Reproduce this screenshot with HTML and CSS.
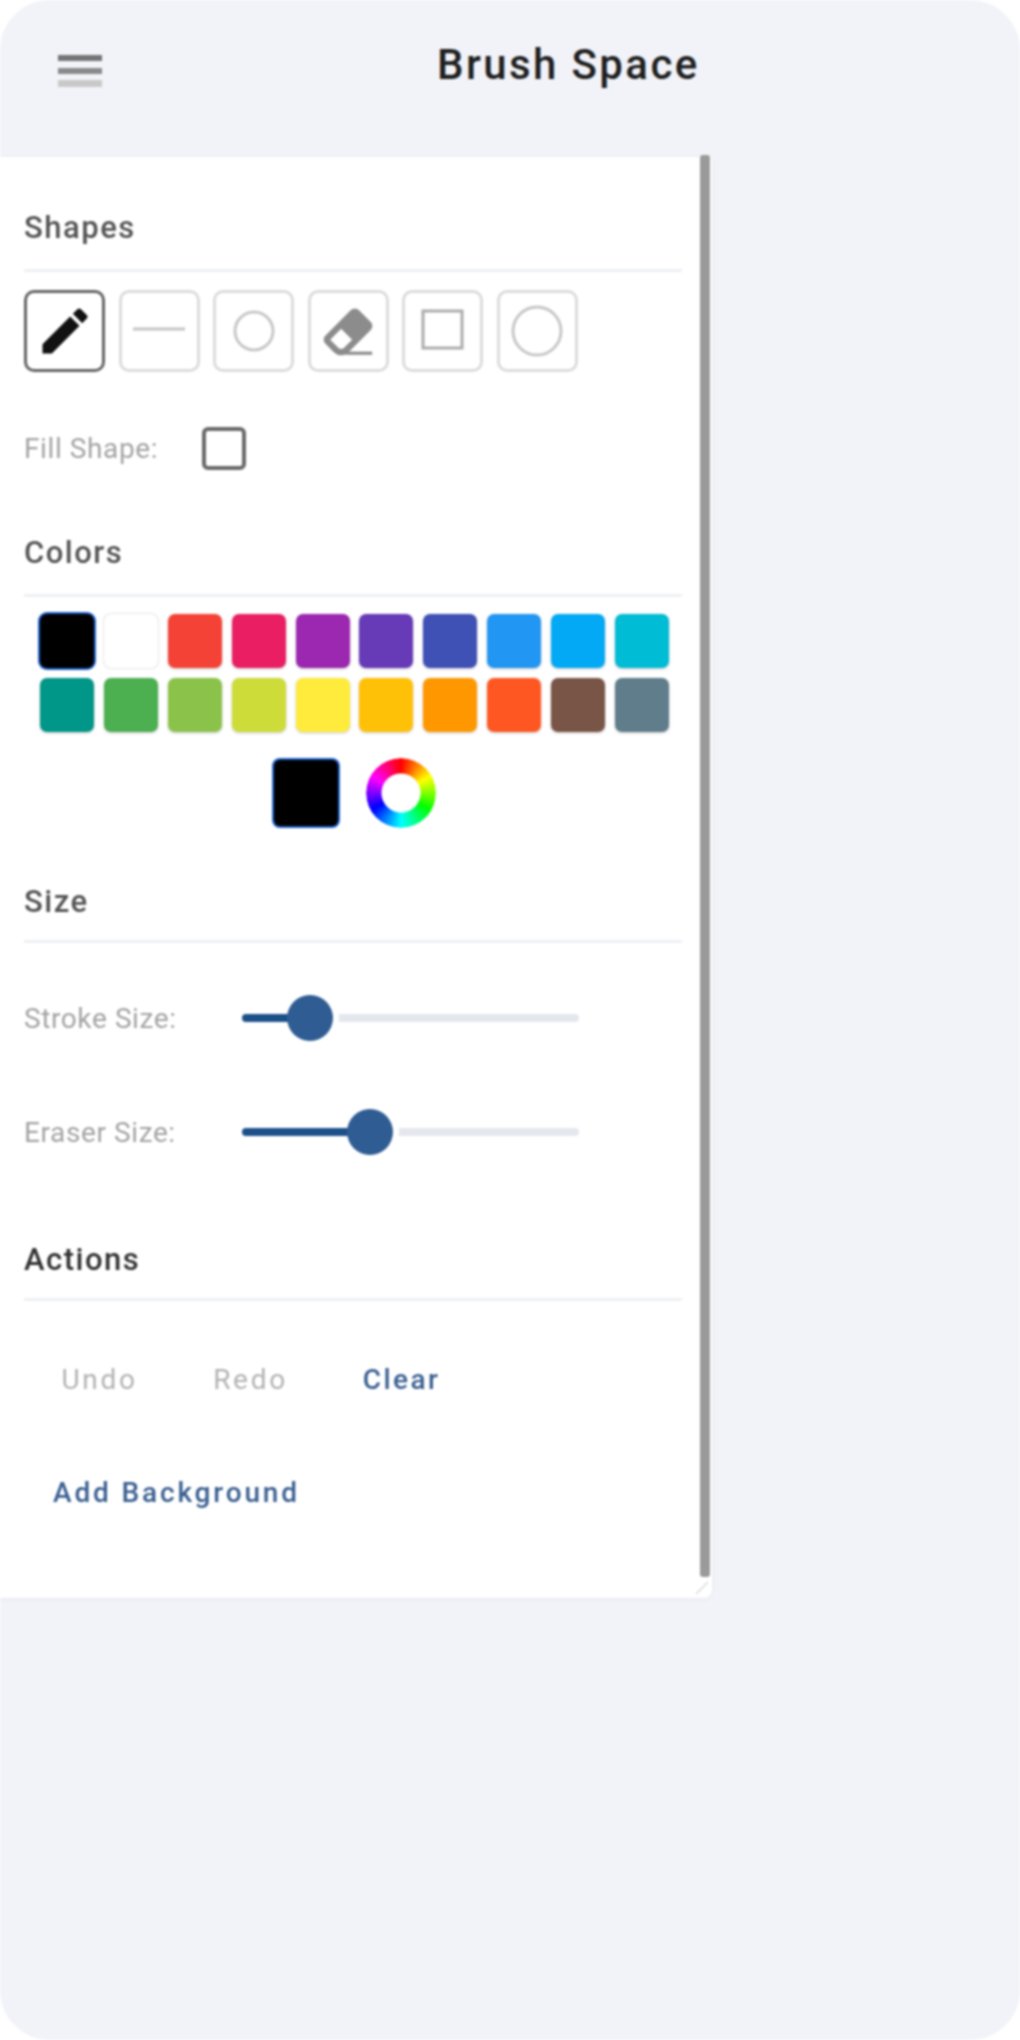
FILE: index.html
```html
<!DOCTYPE html>
<html lang="en">
<head>
<meta charset="utf-8">
<title>Brush Space</title>
<link rel="stylesheet" href="styles.css">
</head>
<body>
<div class="app">
  <header class="topbar">
    <button class="menu" aria-label="Menu">
      <svg viewBox="0 0 44 32" width="44" height="32"><rect y="0" width="44" height="6" fill="#757575"/><rect y="13" width="44" height="6" fill="#8a8a8a"/><rect y="25" width="44" height="7" fill="#c9c9c9"/></svg>
    </button>
    <h1 class="title">Brush Space</h1>
  </header>
  <aside class="panel">
    <div class="panel-body">
      <h2 class="section-title">Shapes</h2>
      <div class="shapes">
        <button class="tool tool-active"><svg viewBox="0 0 24 24" width="60" height="60"><path fill="#111" d="M3 17.25V21h3.75L17.81 9.94l-3.75-3.75L3 17.25zM20.71 7.04c.39-.39.39-1.02 0-1.41l-2.34-2.34c-.39-.39-1.02-.39-1.41 0l-1.83 1.83 3.75 3.75 1.83-1.83z"/></svg></button>
        <button class="tool"><svg viewBox="0 0 60 60" width="60" height="60"><path d="M4 28h52" stroke="#c4c4c4" stroke-width="3"/></svg></button>
        <button class="tool"><svg viewBox="0 0 60 60" width="60" height="60"><circle cx="30" cy="30" r="19" fill="none" stroke="#c8c8c8" stroke-width="3"/></svg></button>
        <button class="tool"><svg viewBox="0 0 24 24" width="58" height="58"><path fill="#8c8c8c" stroke="#8c8c8c" stroke-width=".6" d="M16.24 3.56l4.95 4.94c.78.79.78 2.05 0 2.84L12 20.53a4.01 4.01 0 0 1-5.66 0L2.81 17c-.78-.79-.78-2.05 0-2.84l10.6-10.6c.79-.78 2.05-.78 2.83 0M4.22 15.58l3.54 3.53c.78.79 2.04.79 2.83 0l3.53-3.53-4.95-4.95-4.95 4.95z"/><path d="M11 21.2h11" stroke="#8c8c8c" stroke-width="1.3"/></svg></button>
        <button class="tool"><svg viewBox="0 0 60 60" width="60" height="60"><rect x="10" y="10" width="39" height="37" fill="none" stroke="#acacac" stroke-width="3"/></svg></button>
        <button class="tool"><svg viewBox="0 0 60 60" width="60" height="60"><circle cx="30" cy="30" r="24" fill="none" stroke="#c8c8c8" stroke-width="3"/></svg></button>
      </div>
      <div class="fill-row">
        <span class="field-label fill-label">Fill Shape:</span>
        <span class="checkbox"></span>
      </div>

      <h2 class="section-title colors-title">Colors</h2>
      <div class="swatches">
        <span class="swatch swatch-selected" style="background:#000000"></span>
        <span class="swatch swatch-white" style="background:#ffffff"></span>
        <span class="swatch" style="background:#f44336"></span>
        <span class="swatch" style="background:#e91e63"></span>
        <span class="swatch" style="background:#9c27b0"></span>
        <span class="swatch" style="background:#673ab7"></span>
        <span class="swatch" style="background:#3f51b5"></span>
        <span class="swatch" style="background:#2196f3"></span>
        <span class="swatch" style="background:#03a9f4"></span>
        <span class="swatch" style="background:#00bcd4"></span>
        <span class="swatch" style="background:#009688"></span>
        <span class="swatch" style="background:#4caf50"></span>
        <span class="swatch" style="background:#8bc34a"></span>
        <span class="swatch" style="background:#cddc39"></span>
        <span class="swatch" style="background:#ffeb3b"></span>
        <span class="swatch" style="background:#ffc107"></span>
        <span class="swatch" style="background:#ff9800"></span>
        <span class="swatch" style="background:#ff5722"></span>
        <span class="swatch" style="background:#795548"></span>
        <span class="swatch" style="background:#607d8b"></span>
      </div>
      <div class="current-row">
        <span class="current-color"></span>
        <span class="wheel"></span>
      </div>

      <h2 class="section-title size-title">Size</h2>
      <div class="slider-row slider-first">
        <span class="field-label slider-label">Stroke Size:</span>
        <div class="slider">
          <span class="track-fill" style="width:68px"></span>
          <span class="thumb" style="left:68px"></span>
        </div>
      </div>
      <div class="slider-row slider-second">
        <span class="field-label slider-label">Eraser Size:</span>
        <div class="slider">
          <span class="track-fill" style="width:128px"></span>
          <span class="thumb" style="left:128px"></span>
        </div>
      </div>

      <h2 class="section-title actions-title">Actions</h2>
      <div class="actions">
        <button class="action action-disabled">Undo</button>
        <button class="action action-disabled">Redo</button>
        <button class="action">Clear</button>
      </div>
      <button class="add-background">Add Background</button>
    </div>
    <div class="scrollbar"></div>
  </aside>
</div>
</body>
</html>
```
FILE: styles.css
```css
* { box-sizing: border-box; }
html, body { margin: 0; padding: 0; background: #fff; }
body { font-family: Roboto, "Liberation Sans", sans-serif; }
button { font-family: inherit; background: none; border: 0; padding: 0; }

.app {
  height: 2040px;
  width: 1020px;
  background: #f1f3f8;
  border-radius: 50px;
  overflow: hidden;
  filter: blur(1.1px);
}
.topbar {
  height: 157px;
  display: flex;
  align-items: flex-start;
}
.menu { margin: 55px 0 0 58px; width: 44px; height: 32px; display: flex; }
.title {
  margin: 41px 0 0 335px;
  font-size: 42px;
  line-height: 48px;
  font-weight: 500;
  letter-spacing: 2.4px;
  color: #1f1f1f;
  white-space: nowrap;
}

.panel {
  position: relative;
  width: 712px;
  height: 1441px;
  background: #fff;
  display: flex;
  border-bottom-right-radius: 8px;
  box-shadow: 0 1px 5px rgba(40, 50, 80, .05);
}
.panel::after {
  content: "";
  position: absolute;
  right: 4px;
  bottom: 4px;
  width: 14px;
  height: 14px;
  background: linear-gradient(135deg, transparent 50%, #e6e6e6 50%, #e6e6e6 62%, transparent 62%);
}
.panel-body {
  width: 658px;
  margin: 0 24px;
  flex: none;
}
.scrollbar {
  width: 10px;
  height: 1422px;
  margin-left: -6px;
  margin-top: -2px;
  background: #9a9a9a;
  border-radius: 3px;
  flex: none;
}

.section-title {
  margin: 51px 0 0;
  padding-bottom: 21px;
  font-size: 31px;
  line-height: 40px;
  font-weight: 500;
  letter-spacing: 1.5px;
  color: #555;
  border-bottom: 3px solid #eef0f4;
}
.colors-title { margin-top: 63px; }
.size-title { margin-top: 54px; padding-bottom: 18px; }
.actions-title { margin-top: 85px; color: #333; padding-bottom: 18px; }

.shapes { display: flex; gap: 13.5px; margin-top: 18px; }
.tool {
  width: 81px;
  height: 82px;
  border: 3px solid #dcdcdc;
  border-radius: 10px;
  display: flex;
  align-items: center;
  justify-content: center;
}
.tool-active { border-color: #666; }
.fill-row { display: flex; align-items: center; margin-top: 55px; height: 43px; }
.field-label { font-size: 28px; letter-spacing: .6px; color: #a3a3a3; white-space: nowrap; }
.fill-label { width: 178px; }
.checkbox {
  width: 44px;
  height: 43px;
  border: 4px solid #6a6a6a;
  border-radius: 6px;
}

.swatches {
  display: grid;
  grid-template-columns: repeat(10, 54px);
  column-gap: 9.9px;
  row-gap: 10px;
  margin: 17px 0 0 16px;
}
.swatch {
  height: 54px;
  border-radius: 7px;
  box-shadow: 0 1px 3px rgba(0, 0, 0, .22);
}
.swatch-selected { box-shadow: 0 0 0 2px #1f62cc; }
.swatch-white { box-shadow: 0 0 2px rgba(0, 0, 0, .3); }
.current-row {
  display: flex;
  justify-content: center;
  align-items: center;
  gap: 28px;
  margin-top: 26px;
  padding-left: 4px;
}
.current-color {
  width: 64px;
  height: 66px;
  background: #000;
  border-radius: 6px;
  box-shadow: 0 0 0 2px #1f62cc;
}
.wheel {
  width: 70px;
  height: 70px;
  border-radius: 50%;
  background: conic-gradient(#f00, #ff0, #0f0, #0ff, #00f, #f0f, #f00);
  -webkit-mask: radial-gradient(circle, transparent 19px, #000 20px);
  mask: radial-gradient(circle, transparent 19px, #000 20px);
}

.slider-row { display: flex; align-items: center; height: 46px; }
.slider-first { margin-top: 52px; }
.slider-second { margin-top: 68px; }
.slider-label { width: 218px; }
.slider {
  position: relative;
  width: 337px;
  height: 8px;
  background: #e4e7ee;
  border-radius: 5px;
}
.track-fill {
  position: absolute;
  left: 0;
  top: 0;
  height: 100%;
  background: #1c5089;
  border-radius: 5px 0 0 5px;
}
.thumb {
  position: absolute;
  top: 50%;
  width: 46px;
  height: 46px;
  margin: -23px 0 0 -23px;
  background: #2f5d93;
  border-radius: 50%;
  box-shadow: 6px 0 0 #fff;
}

.actions { display: flex; margin-top: 42px; }
.action {
  width: 151px;
  height: 72px;
  font-size: 28px;
  font-weight: 500;
  letter-spacing: 2.4px;
  color: #3a5f91;
}
.action-disabled { color: #b2b2b2; font-weight: 400; letter-spacing: 2.7px; }
.add-background {
  display: block;
  height: 72px;
  margin-top: 41px;
  padding-left: 29px;
  font-size: 28px;
  font-weight: 500;
  letter-spacing: 2.85px;
  color: #3a5f91;
  white-space: nowrap;
}
```
